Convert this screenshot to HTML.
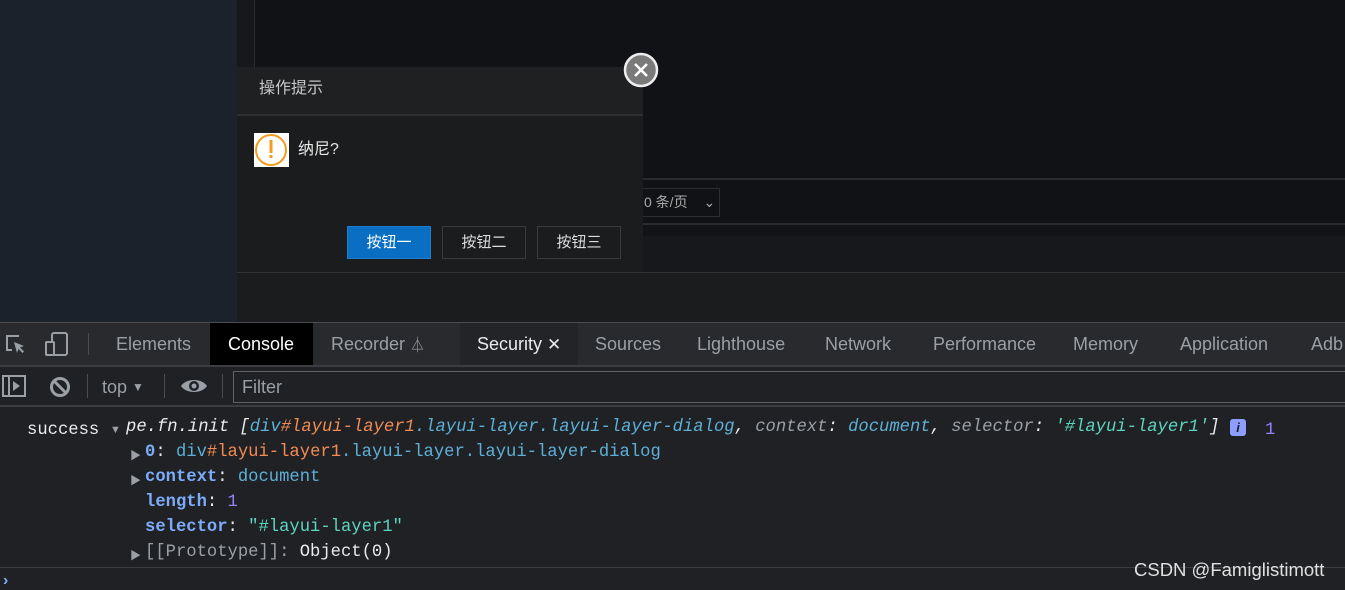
<!DOCTYPE html>
<html><head><meta charset="utf-8"><style>
*{margin:0;padding:0;box-sizing:border-box}
body{width:1345px;height:590px;overflow:hidden;background:#202124;position:relative;font-family:"Liberation Sans","Noto Sans CJK SC",sans-serif}
.a{position:absolute}
.mono{font-family:"Liberation Mono","DejaVu Sans Mono",monospace;font-size:17.2px;white-space:pre;line-height:20px}
.tab{position:absolute;top:323px;height:42px;line-height:42px;font-size:18px;color:#9aa0a6}
</style></head><body>
<div class="a" style="left:0;top:0;width:237px;height:322px;background:#1c222b"></div>
<div class="a" style="left:237px;top:0;width:1108px;height:178px;background:#111215"></div>
<div class="a" style="left:237px;top:0;width:18px;height:178px;background:#17181b"></div>
<div class="a" style="left:254px;top:0;width:1px;height:178px;background:#2a2b2e"></div>
<div class="a" style="left:237px;top:178px;width:1108px;height:2px;background:#2a2b2e"></div>
<div class="a" style="left:237px;top:180px;width:1108px;height:43px;background:#111215"></div>
<div class="a" style="left:600px;top:188px;width:120px;height:29px;border:1px solid #2d2e31;color:#aaa;font-size:14px;line-height:27px;padding-left:43px">0 条/页 <span style="margin-left:12px">⌄</span></div>
<div class="a" style="left:237px;top:223px;width:1108px;height:2px;background:#2a2b2e"></div>
<div class="a" style="left:237px;top:225px;width:1108px;height:11px;background:#121316"></div>
<div class="a" style="left:237px;top:236px;width:1108px;height:36px;background:#17181b"></div>
<div class="a" style="left:237px;top:272px;width:1108px;height:1px;background:#333"></div>
<div class="a" style="left:237px;top:273px;width:1108px;height:49px;background:#1b1c1e"></div>
<div class="a" style="left:237px;top:67px;width:406px;height:205px;background:#1b1c1e"></div>
<div class="a" style="left:237px;top:67px;width:406px;height:48px;background:#1f2022;color:#c8c8c8;font-size:16px;line-height:44px;padding-left:22px">操作提示</div>
<div class="a" style="left:237px;top:114px;width:406px;height:2px;background:#2c2d30"></div>
<div class="a" style="left:254px;top:133px;width:35px;height:34px;background:#fff"><svg width="35" height="34"><circle cx="17" cy="17" r="15" fill="none" stroke="#f39c1f" stroke-width="2"/><rect x="15.5" y="7" width="3" height="13" fill="#f39c1f"/><rect x="15.5" y="22" width="3" height="3" fill="#f39c1f"/></svg></div>
<div class="a" style="left:298px;top:139px;color:#e8e8e8;font-size:16px;line-height:22px">纳尼?</div>
<div class="a" style="left:347px;top:226px;width:84px;height:33px;background:#0a6fc2;border:1px solid #1e7fd0;color:#fff;font-size:15px;line-height:31px;text-align:center">按钮一</div>
<div class="a" style="left:442px;top:226px;width:84px;height:33px;border:1px solid #3a3b3e;color:#ddd;font-size:15px;line-height:31px;text-align:center">按钮二</div>
<div class="a" style="left:537px;top:226px;width:84px;height:33px;border:1px solid #3a3b3e;color:#ddd;font-size:15px;line-height:31px;text-align:center">按钮三</div>
<svg class="a" style="left:623px;top:52px" width="36" height="36"><circle cx="18" cy="18" r="16" fill="#7a7a7a" stroke="#eee" stroke-width="2.5"/><path d="M12 12L24 24M24 12L12 24" stroke="#fff" stroke-width="2.5"/></svg>
<div class="a" style="left:0;top:322px;width:1345px;height:1px;background:#4a4c50"></div>
<div class="a" style="left:0;top:323px;width:1345px;height:43px;background:#292a2d"></div>
<div class="a" style="left:210px;top:323px;width:103px;height:42px;background:#000"></div>
<div class="a" style="left:460px;top:323px;width:118px;height:42px;background:#232427"></div>
<svg class="a" style="left:4px;top:333px" width="24" height="24"><path d="M15 3H3v14h5" fill="none" stroke="#9aa0a6" stroke-width="2"/><path d="M10 9l10 4-4 1.5 4 4-1.5 1.5-4-4L13 20z" fill="#9aa0a6"/></svg>
<svg class="a" style="left:44px;top:331px" width="26" height="26"><rect x="8" y="2" width="15" height="22" rx="2" fill="none" stroke="#9aa0a6" stroke-width="2"/><rect x="2" y="11" width="8" height="13" rx="1" fill="#292a2d" stroke="#9aa0a6" stroke-width="2"/></svg>
<div class="a" style="left:88px;top:333px;width:1px;height:22px;background:#4a4c50"></div>
<div class="tab" style="left:116px">Elements</div>
<div class="tab" style="left:228px;color:#fff">Console</div>
<div class="tab" style="left:331px">Recorder <span style="font-size:15px">⏃</span></div>
<div class="tab" style="left:477px;color:#e8eaed">Security <span style="font-size:17px">✕</span></div>
<div class="tab" style="left:595px">Sources</div>
<div class="tab" style="left:697px">Lighthouse</div>
<div class="tab" style="left:825px">Network</div>
<div class="tab" style="left:933px">Performance</div>
<div class="tab" style="left:1073px">Memory</div>
<div class="tab" style="left:1180px">Application</div>
<div class="tab" style="left:1311px">Adb</div>
<div class="a" style="left:0;top:365px;width:1345px;height:2px;background:#3c3d40"></div>
<div class="a" style="left:0;top:367px;width:1345px;height:39px;background:#202124"></div>
<svg class="a" style="left:2px;top:375px" width="24" height="22"><rect x="1" y="1" width="22" height="20" fill="none" stroke="#9aa0a6" stroke-width="2"/><path d="M7 1v20" stroke="#9aa0a6" stroke-width="2"/><path d="M11 6l7 5-7 5z" fill="#9aa0a6"/></svg>
<svg class="a" style="left:49px;top:376px" width="22" height="22"><circle cx="11" cy="11" r="8.5" fill="none" stroke="#9aa0a6" stroke-width="3"/><path d="M5 5l12 12" stroke="#9aa0a6" stroke-width="3"/></svg>
<div class="a" style="left:87px;top:374px;width:1px;height:24px;background:#4a4c50"></div>
<div class="a" style="left:102px;top:375px;color:#9aa0a6;font-size:18px;line-height:24px">top <span style="font-size:12px;position:relative;top:-2px">▼</span></div>
<div class="a" style="left:164px;top:374px;width:1px;height:24px;background:#4a4c50"></div>
<svg class="a" style="left:180px;top:377px" width="28" height="18"><path d="M1 9C6 1 22 1 27 9 22 17 6 17 1 9z" fill="#9aa0a6"/><circle cx="14" cy="9" r="5" fill="#202124"/><circle cx="14" cy="9" r="2.5" fill="#9aa0a6"/></svg>
<div class="a" style="left:222px;top:374px;width:1px;height:24px;background:#4a4c50"></div>
<div class="a" style="left:233px;top:371px;width:1120px;height:32px;border:1px solid #5f6368;background:#202124;color:#9aa0a6;font-size:18px;line-height:30px;padding-left:8px">Filter</div>
<div class="a" style="left:0;top:405px;width:1345px;height:2px;background:#3c3d40"></div>
<div class="a mono" style="left:27px;top:421px;color:#e8eaed">success</div>
<div class="a" style="left:110px;top:424px;color:#9aa0a6;font-size:11px">▼</div>
<div class="a mono" style="left:126px;top:418px;font-style:italic;color:#e8eaed">pe.fn.init [<span style="color:#5db0d7">div</span><span style="color:#f28b54">#layui-layer1</span><span style="color:#5db0d7">.layui-layer.layui-layer-dialog</span>, <span style="color:#9aa0a6">context</span>: <span style="color:#5db0d7">document</span>, <span style="color:#9aa0a6">selector</span>: <span style="color:#5cd5c0">'#layui-layer1'</span>]</div>
<div class="a" style="left:1230px;top:419px;width:16px;height:17px;background:#8c9eff;border-radius:3px;color:#202124;font-size:13px;font-style:italic;text-align:center;line-height:17px;font-weight:bold">i</div>
<div class="a mono" style="left:1265px;top:421px;color:#9980ff">1</div>
<div class="a" style="left:130px;top:447px;color:#9aa0a6;font-size:11px">▶</div>
<div class="a mono" style="left:145px;top:443px;color:#e8eaed"><b style="color:#7cacf8">0</b>: <span style="color:#5db0d7">div</span><span style="color:#f28b54">#layui-layer1</span><span style="color:#5db0d7">.layui-layer.layui-layer-dialog</span></div>
<div class="a" style="left:130px;top:472px;color:#9aa0a6;font-size:11px">▶</div>
<div class="a mono" style="left:145px;top:468px;color:#e8eaed"><b style="color:#7cacf8">context</b>: <span style="color:#5db0d7">document</span></div>
<div class="a mono" style="left:145px;top:493px;color:#e8eaed"><b style="color:#7cacf8">length</b>: <span style="color:#9980ff">1</span></div>
<div class="a mono" style="left:145px;top:518px;color:#e8eaed"><b style="color:#7cacf8">selector</b>: <span style="color:#5cd5c0">"#layui-layer1"</span></div>
<div class="a" style="left:130px;top:547px;color:#9aa0a6;font-size:11px">▶</div>
<div class="a mono" style="left:145px;top:543px;color:#9aa0a6">[[Prototype]]: <span style="color:#e8eaed">Object(0)</span></div>
<div class="a" style="left:0;top:567px;width:1345px;height:1px;background:#3c3d40"></div>
<div class="a" style="left:3px;top:572px;color:#7cacf8;font-size:16px;font-weight:bold">›</div>
<div class="a" style="left:1134px;top:558px;color:#e0e0e0;font-size:18.5px;line-height:24px">CSDN @Famiglistimott</div>
</body></html>
